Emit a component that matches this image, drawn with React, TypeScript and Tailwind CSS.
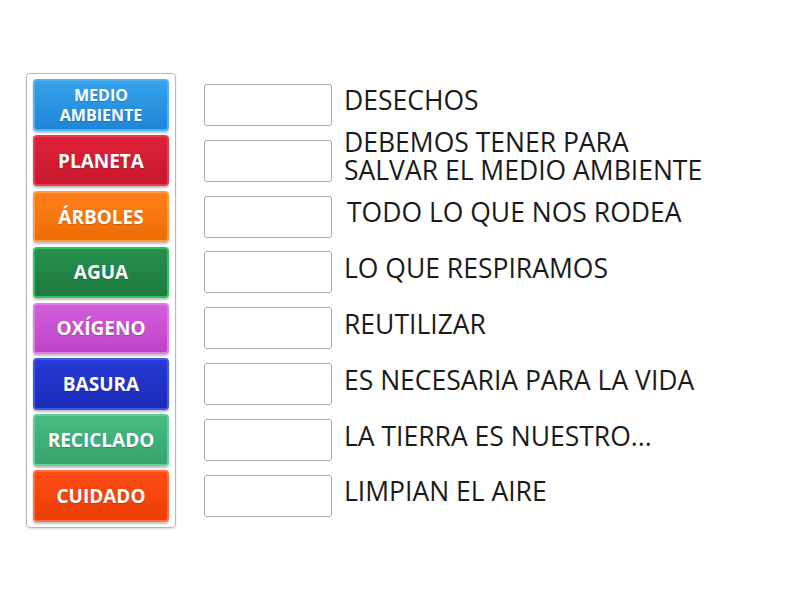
import React from "react";

const tiles = [
  { label: "MEDIO\nAMBIENTE", small: true, cls: "border-[#52b2f0] bg-gradient-to-b from-[#36a2ea] to-[#1d86d6]" },
  { label: "PLANETA", cls: "border-[#ea3d52] bg-gradient-to-b from-[#df2139] to-[#c6182c]" },
  { label: "ÁRBOLES", cls: "border-[#ff9c40] bg-gradient-to-b from-[#ff8018] to-[#ee6c06]" },
  { label: "AGUA", cls: "border-[#31c266] bg-gradient-to-b from-[#25904c] to-[#1e7a3f]" },
  { label: "OXÍGENO", cls: "border-[#e07ce6] bg-gradient-to-b from-[#d25edb] to-[#bd43c6]" },
  { label: "BASURA", cls: "border-[#4257e4] bg-gradient-to-b from-[#2739d8] to-[#1b2bb6]" },
  { label: "RECICLADO", cls: "border-[#62d09a] bg-gradient-to-b from-[#47ba82] to-[#37a46e]" },
  { label: "CUIDADO", cls: "border-[#ff6e3e] bg-gradient-to-b from-[#ff4c16] to-[#ec3d06]" },
];

const defs: { lines: string[]; shift?: boolean }[] = [
  { lines: ["DESECHOS"] },
  { lines: ["DEBEMOS TENER PARA", "SALVAR EL MEDIO AMBIENTE"] },
  { lines: ["TODO LO QUE NOS RODEA"], shift: true },
  { lines: ["LO QUE RESPIRAMOS"] },
  { lines: ["REUTILIZAR"] },
  { lines: ["ES NECESARIA PARA LA VIDA"] },
  { lines: ["LA TIERRA ES NUESTRO..."] },
  { lines: ["LIMPIAN EL AIRE"] },
];

export default function App() {
  return (
    <div
      className="w-[800px] h-[600px] bg-white relative"
      style={{ fontFamily: '"Open Sans", "Noto Sans", sans-serif' }}
    >
      <div className="flex pl-[26px] pt-[73px]">
        <div className="w-[150px] border border-[#b8b8b8] rounded-[4px] px-[6px] py-[5px] flex flex-col gap-[4.4px] shadow-[0_1px_2px_rgba(0,0,0,0.15)]">
          {tiles.map((t, i) => (
            <div
              key={i}
              className={`h-[51.5px] w-[136px] rounded-[4px] border-2 flex items-center justify-center text-center text-white font-bold shadow-[0_2px_2px_rgba(0,0,0,0.25)] ${t.cls}`}
              style={{ textShadow: "0 1px 1px rgba(0,0,0,0.2)" }}
            >
              {t.small ? (
                <span className="text-[16px] leading-[20px] whitespace-pre-line">{t.label}</span>
              ) : (
                <span className="text-[19px] leading-[22px]">{t.label}</span>
              )}
            </div>
          ))}
        </div>
        <div className="ml-[28px] pt-[6px] flex flex-col gap-[4.4px]">
          {defs.map((d, i) => (
            <div key={i} className="h-[51.5px] flex items-center">
              <div className="w-[128px] h-[42px] border border-[#aaaaaa] rounded-[3px] bg-white shrink-0" />
              <div
                className={`${d.shift ? "ml-[15px]" : "ml-[12px]"} mb-[9px] text-[26.5px] leading-[28px] text-[#1a1a1a] whitespace-nowrap font-normal`}
              >
                {d.lines.map((l, j) => (
                  <div key={j}>{l}</div>
                ))}
              </div>
            </div>
          ))}
        </div>
      </div>
    </div>
  );
}
